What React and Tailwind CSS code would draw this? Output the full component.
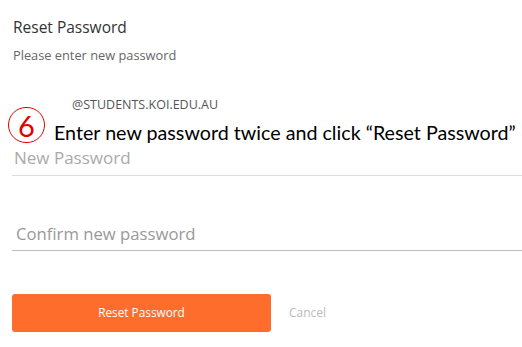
import React from "react";

const App = () => {
  return (
    <div className="w-[522px] h-[347px] bg-white overflow-hidden font-['Open_Sans',sans-serif]">
      <div className="pt-[17px] pl-[13px]">
        <h1 className="text-[15.5px] leading-[20px] text-[#333]">Reset Password</h1>
        <p className="mt-[10px] text-[12.8px] leading-[16px] text-[#666]">Please enter new password</p>
      </div>

      <div className="mt-[34px] pl-[72px] text-[12.5px] leading-[16px] text-[#555]">@STUDENTS.KOI.EDU.AU</div>

      {/* annotation: step 6 */}
      <div className="flex items-start h-[27px]">
        <div className="ml-[8px] -mt-[6px] w-[37px] h-[36px] shrink-0 rounded-full border-[1.5px] border-[#e00000] flex items-center justify-center text-[#e00000] text-[29px] leading-none font-['Lato',sans-serif]">
          6
        </div>
        <span className="ml-[9px] mt-[9.5px] text-[19.7px] leading-[20px] text-black font-['Lato',sans-serif] whitespace-nowrap">
          Enter new password twice and click “Reset Password”
        </span>
      </div>

      <div className="ml-[12px]">
        <input
          type="password"
          placeholder="New Password"
          className="block w-full h-[36px] px-[2px] text-[17px] outline-none border-b border-[#dcdcdc] placeholder:text-[#aaa] bg-transparent"
        />
        <input
          type="password"
          placeholder="Confirm new password"
          className="block w-full mt-[41px] h-[34px] px-[4px] text-[16.7px] outline-none border-b border-[#bdbdbd] placeholder:text-[#999] bg-transparent"
        />
      </div>

      <div className="flex items-center ml-[12px] mt-[43px]">
        <button className="w-[259px] h-[38px] rounded-[3px] bg-[#ff6d2d] text-white text-[11.8px]">Reset Password</button>
        <button className="ml-[18px] text-[12px] text-[#bbb]">Cancel</button>
      </div>
    </div>
  );
};

export default App;
